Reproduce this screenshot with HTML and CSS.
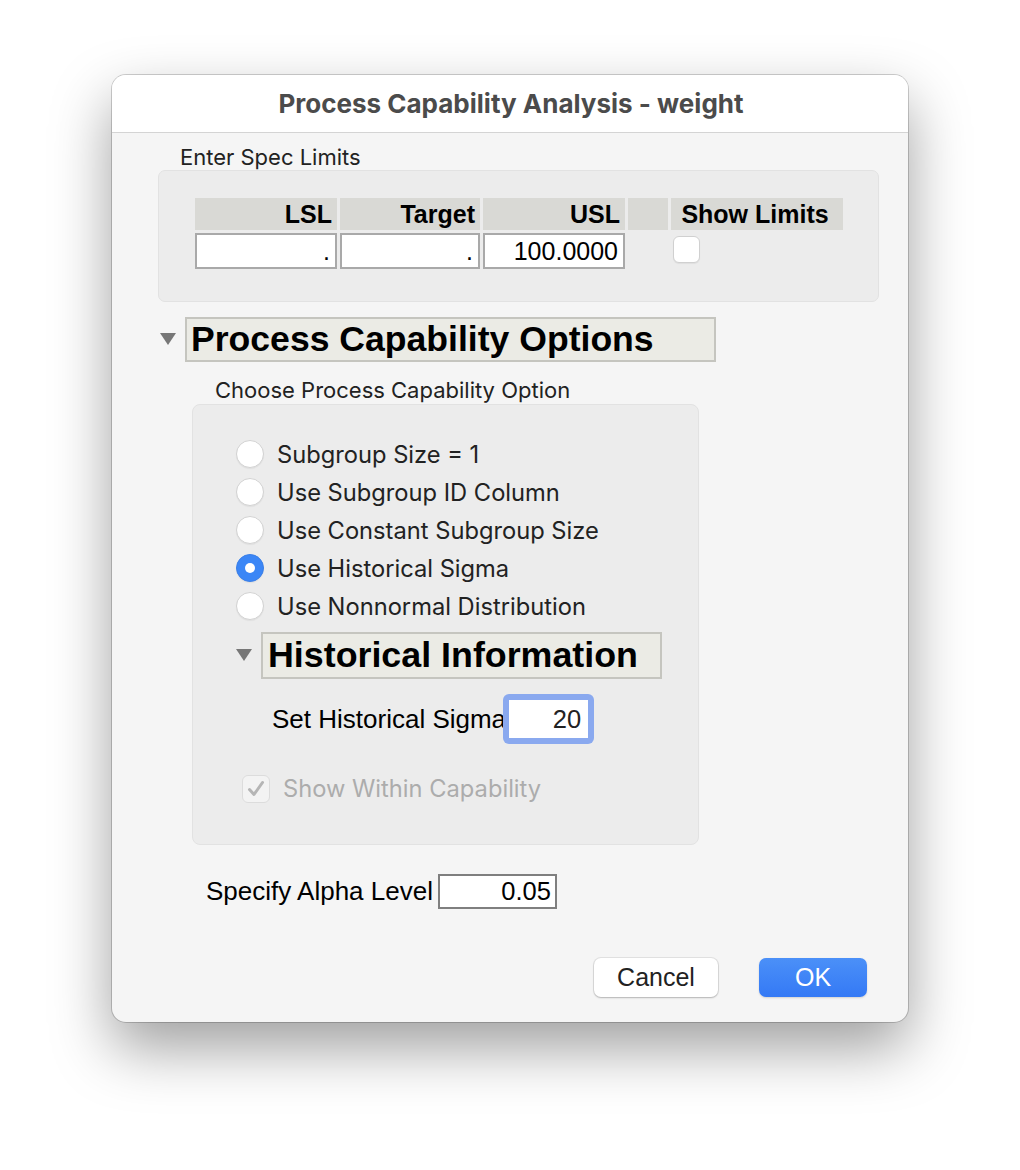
FILE: index.html
```html
<!DOCTYPE html>
<html>
<head>
<meta charset="utf-8">
<title>Process Capability Analysis - weight</title>
<link rel="stylesheet" href="styles.css">
</head>
<body>
<div class="window">
  <div class="titlebar">Process Capability Analysis - weight</div>
  <div class="content">
    <div class="group-label spec-label">Enter Spec Limits</div>
    <div class="spec-box">
      <div class="spec-grid">
        <div class="hcell">LSL</div>
        <div class="hcell">Target</div>
        <div class="hcell">USL</div>
        <div class="hcell"></div>
        <div class="hcell center">Show Limits</div>
        <div class="vcell">.</div>
        <div class="vcell">.</div>
        <div class="vcell">100.0000</div>
        <div class="blank"></div>
        <div class="chk-cell"><span class="checkbox"></span></div>
      </div>
    </div>

    <div class="outline-row pco">
      <span class="disclosure"></span>
      <div class="outline-head">Process Capability Options</div>
    </div>

    <div class="group-label choose-label">Choose Process Capability Option</div>
    <div class="options-box">
      <div class="radio-list">
        <div class="radio-row"><span class="radio"></span><span class="rlabel">Subgroup Size = 1</span></div>
        <div class="radio-row"><span class="radio"></span><span class="rlabel">Use Subgroup ID Column</span></div>
        <div class="radio-row"><span class="radio"></span><span class="rlabel">Use Constant Subgroup Size</span></div>
        <div class="radio-row"><span class="radio on"></span><span class="rlabel">Use Historical Sigma</span></div>
        <div class="radio-row"><span class="radio"></span><span class="rlabel">Use Nonnormal Distribution</span></div>
      </div>
      <div class="outline-row hist">
        <span class="disclosure"></span>
        <div class="outline-head hist-head">Historical Information</div>
      </div>
      <div class="sigma-row">
        <span class="hlabel">Set Historical Sigma</span>
        <div class="focus-ring"><div class="focus-input">20</div></div>
      </div>
      <div class="check-row">
        <span class="checkbox disabled">
          <svg viewBox="0 0 28 28" width="28" height="28"><path d="M7.5 14.5 L12 19.5 L20.5 7.5" fill="none" stroke="#b5b5b5" stroke-width="3" stroke-linecap="round" stroke-linejoin="round"/></svg>
        </span>
        <span class="clabel">Show Within Capability</span>
      </div>
    </div>

    <div class="alpha-row">
      <span class="hlabel">Specify Alpha Level</span>
      <div class="alpha-input">0.05</div>
    </div>

    <div class="buttons">
      <div class="btn cancel">Cancel</div>
      <div class="btn ok">OK</div>
    </div>
  </div>
</div>
</body>
</html>
```

FILE: styles.css
```css
html, body {
  margin: 0;
  padding: 0;
  background: #ffffff;
}
body {
  width: 1020px;
  height: 1170px;
  overflow: hidden;
}
.window {
  margin: 75px 0 0 112px;
  width: 796px;
  height: 947px;
  box-sizing: border-box;
  border-radius: 14px;
  background: #f5f5f5;
  overflow: hidden;
  box-shadow: 0 0 0 1px rgba(0,0,0,0.18), 0 26px 60px rgba(0,0,0,0.38);
  font-family: Inter, "Liberation Sans", sans-serif;
  color: #222;
}
.titlebar {
  height: 57px;
  background: #ffffff;
  border-bottom: 1px solid #d4d4d4;
  text-align: center;
  font-family: Inter, "Liberation Sans", sans-serif;
  font-weight: 700;
  font-size: 26px;
  line-height: 57px;
  color: #4b4b4b;
  padding-left: 2px;
}
.content {
  display: flex;
  flex-direction: column;
  align-items: flex-start;
}
.group-label {
  font-size: 22px;
  line-height: 24px;
  color: #222;
}
.spec-label {
  margin: 12px 0 0 68px;
}
.spec-box {
  margin: 1px 0 0 46px;
  width: 721px;
  height: 132px;
  box-sizing: border-box;
  background: #ececec;
  border: 1px solid #e2e2e2;
  border-radius: 7px;
  padding: 27px 0 0 36px;
}
.spec-grid {
  display: grid;
  grid-template-columns: 142px 140px 142px 40px 172px;
  grid-template-rows: 32px 36px;
  column-gap: 3px;
  row-gap: 3px;
  font-family: "Liberation Sans", Arial, sans-serif;
}
.hcell {
  background: #d9d9d5;
  font-weight: 700;
  font-size: 25px;
  line-height: 32px;
  text-align: right;
  padding-right: 5px;
  color: #000;
}
.hcell.center {
  text-align: center;
  padding-right: 4px;
}
.vcell {
  background: #fff;
  border: 2px solid #a9a9a9;
  box-sizing: border-box;
  font-size: 25px;
  line-height: 32px;
  text-align: right;
  padding-right: 5px;
  color: #000;
}
.chk-cell {
  padding: 3px 0 0 2px;
}
.checkbox {
  display: block;
  width: 27px;
  height: 27px;
  box-sizing: border-box;
  border-radius: 6px;
  background: #fff;
  border: 1px solid #d0d0d0;
  box-shadow: 0 1px 1px rgba(0,0,0,0.06);
}
.outline-row {
  display: flex;
  align-items: center;
}
.pco {
  margin: 15px 0 0 48px;
}
.disclosure {
  width: 0;
  height: 0;
  border-left: 8px solid transparent;
  border-right: 8px solid transparent;
  border-top: 12px solid #777;
  margin-right: 9px;
  margin-top: -2px;
}
.outline-head {
  height: 45px;
  box-sizing: border-box;
  background: #ebebe5;
  border: 2px solid #c5c5bf;
  font-family: "Liberation Sans", Arial, sans-serif;
  font-weight: 700;
  font-size: 35.6px;
  line-height: 41px;
  color: #000;
  padding-left: 4px;
  width: 531px;
}
.choose-label {
  margin: 16px 0 0 103px;
}
.options-box {
  margin: 2px 0 0 80px;
  width: 507px;
  height: 441px;
  box-sizing: border-box;
  background: #ececec;
  border: 1px solid #e2e2e2;
  border-radius: 8px;
  padding: 30px 0 0 43px;
}
.radio-row {
  height: 38px;
  display: flex;
  align-items: center;
}
.radio {
  width: 28px;
  height: 28px;
  box-sizing: border-box;
  border-radius: 50%;
  background: #fff;
  border: 1px solid #d2d2d2;
  box-shadow: 0 1px 1px rgba(0,0,0,0.05);
  margin-right: 13px;
  position: relative;
}
.radio.on {
  background: #3b86f6;
  border-color: #3a7fe8;
}
.radio.on::after {
  content: "";
  position: absolute;
  left: 8px;
  top: 8px;
  width: 10px;
  height: 10px;
  border-radius: 50%;
  background: #fff;
}
.rlabel {
  font-size: 23.7px;
  color: #222;
}
.hist {
  margin: 7px 0 0 0;
}
.hist-head {
  width: 401px;
  height: 47px;
  line-height: 43px;
  padding-left: 5px;
  font-size: 35.8px;
}
.sigma-row {
  display: flex;
  align-items: center;
  margin: 15px 0 0 36px;
}
.hlabel {
  font-family: "Liberation Sans", Arial, sans-serif;
  font-size: 26px;
  color: #000;
}
.focus-ring {
  margin-left: -3px;
  width: 91px;
  height: 50px;
  box-sizing: border-box;
  border-radius: 6px;
  background: #8aa9ef;
  padding: 6px;
}
.focus-input {
  background: #fff;
  height: 38px;
  font-family: "Liberation Sans", Arial, sans-serif;
  font-size: 25.5px;
  line-height: 38px;
  text-align: right;
  padding-right: 7px;
  color: #222;
}
.check-row {
  display: flex;
  align-items: center;
  margin: 30px 0 0 6px;
}
.checkbox.disabled {
  width: 28px;
  height: 28px;
  background: #f3f3f3;
  border-color: #dcdcdc;
  margin-right: 13px;
  box-shadow: none;
}
.checkbox.disabled svg {
  display: block;
  margin: -1px 0 0 -1px;
}
.clabel {
  font-size: 23.7px;
  color: #acacac;
}
.alpha-row {
  display: flex;
  align-items: center;
  margin: 29px 0 0 94px;
}
.alpha-input {
  margin-left: 5px;
  width: 119px;
  height: 35px;
  box-sizing: border-box;
  background: #fff;
  border: 2px solid #7f7f7f;
  font-family: "Liberation Sans", Arial, sans-serif;
  font-size: 25.5px;
  line-height: 31px;
  text-align: right;
  padding-right: 4px;
  color: #000;
}
.buttons {
  align-self: flex-end;
  display: flex;
  gap: 41px;
  margin: 49px 41px 0 0;
}
.btn {
  height: 39px;
  box-sizing: border-box;
  border-radius: 7px;
  font-family: "Liberation Sans", Arial, sans-serif;
  font-size: 25px;
  line-height: 39px;
  text-align: center;
}
.cancel {
  width: 124px;
  background: #fff;
  color: #222;
  box-shadow: 0 0 0 1px rgba(0,0,0,0.08), 0 1px 2px rgba(0,0,0,0.2);
}
.ok {
  width: 108px;
  background: linear-gradient(#4b90f8, #3479f5);
  color: #fff;
  box-shadow: 0 1px 2px rgba(0,0,0,0.15);
}
```
